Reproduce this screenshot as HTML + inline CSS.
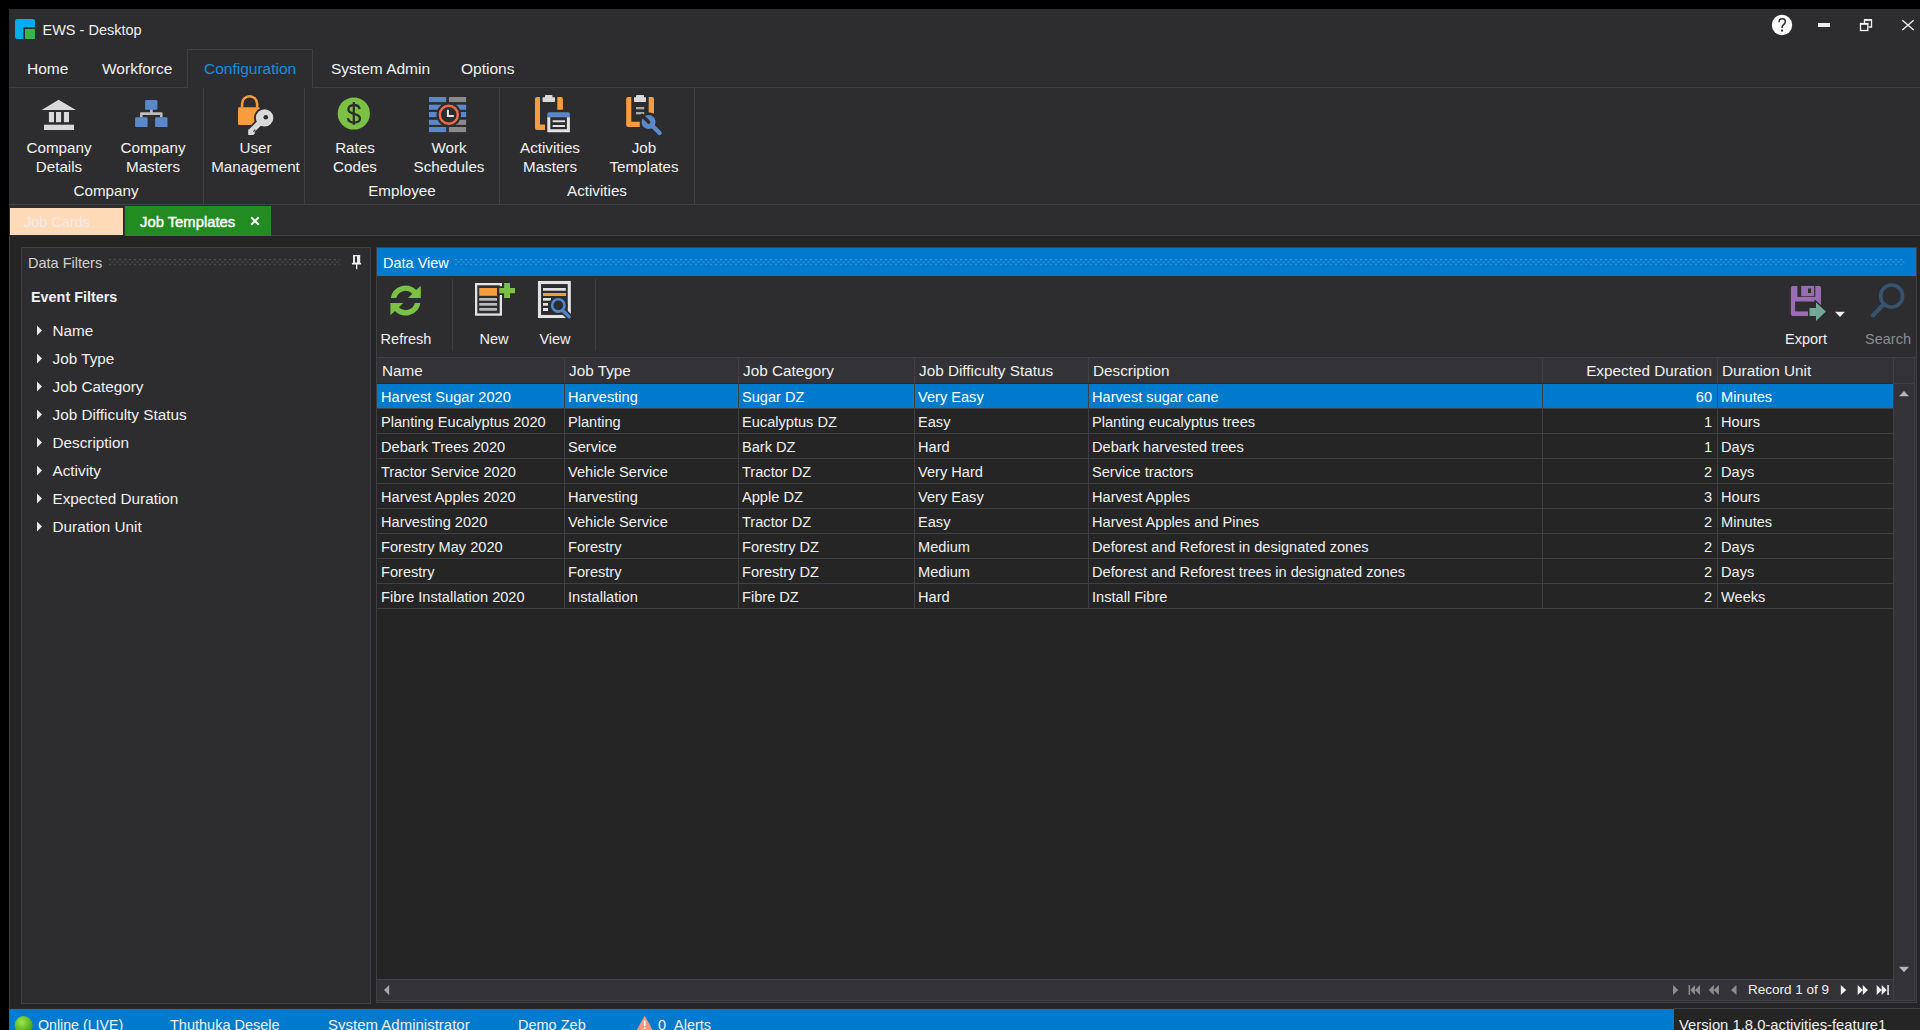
<!DOCTYPE html>
<html><head><meta charset="utf-8"><title>EWS - Desktop</title>
<style>
html,body{margin:0;padding:0;background:#000;width:1920px;height:1030px;overflow:hidden;position:relative;}
.t{position:absolute;white-space:nowrap;line-height:20px;font-family:"Liberation Sans",sans-serif;}
.r{position:absolute;}
</style></head><body>
<div class="r" style="left:9px;top:9px;width:1911px;height:1021px;background:#2d2d30;"></div>
<div class="t" style="left:42.5px;top:19.98px;font-size:14.5px;color:#f1f1f1;transform:scaleY(1.06);transform-origin:0 15px;">EWS - Desktop</div>
<div class="r" style="left:187px;top:49px;width:126px;height:39px;background:#2d2d30;border:1px solid #3f3f46;border-bottom:none;box-sizing:border-box;"></div>
<div class="r" style="left:9px;top:87px;width:1911px;height:1px;background:#3f3f46;"></div>
<div class="r" style="left:188px;top:87px;width:124px;height:1px;background:#2d2d30;"></div>
<div class="t" style="left:27px;top:58.63px;font-size:15.5px;color:#f1f1f1;">Home</div>
<div class="t" style="left:102px;top:58.63px;font-size:15.5px;color:#f1f1f1;">Workforce</div>
<div class="t" style="left:204px;top:58.63px;font-size:15.5px;color:#148de2;">Configuration</div>
<div class="t" style="left:331px;top:58.63px;font-size:15.5px;color:#f1f1f1;">System Admin</div>
<div class="t" style="left:461px;top:58.63px;font-size:15.5px;color:#f1f1f1;">Options</div>
<div class="r" style="left:203px;top:88px;width:1px;height:116px;background:#3f3f46;"></div>
<div class="r" style="left:304px;top:88px;width:1px;height:116px;background:#3f3f46;"></div>
<div class="r" style="left:499px;top:88px;width:1px;height:116px;background:#3f3f46;"></div>
<div class="r" style="left:694px;top:88px;width:1px;height:116px;background:#3f3f46;"></div>
<div class="r" style="left:9px;top:204px;width:1911px;height:1px;background:#3f3f46;"></div>
<div class="t" style="left:-241px;width:600px;text-align:center;top:137.73px;font-size:15.2px;color:#f1f1f1;">Company</div>
<div class="t" style="left:-241px;width:600px;text-align:center;top:156.73px;font-size:15.2px;color:#f1f1f1;">Details</div>
<div class="t" style="left:-147px;width:600px;text-align:center;top:137.73px;font-size:15.2px;color:#f1f1f1;">Company</div>
<div class="t" style="left:-147px;width:600px;text-align:center;top:156.73px;font-size:15.2px;color:#f1f1f1;">Masters</div>
<div class="t" style="left:-44.5px;width:600px;text-align:center;top:137.73px;font-size:15.2px;color:#f1f1f1;">User</div>
<div class="t" style="left:-44.5px;width:600px;text-align:center;top:156.73px;font-size:15.2px;color:#f1f1f1;">Management</div>
<div class="t" style="left:55px;width:600px;text-align:center;top:137.73px;font-size:15.2px;color:#f1f1f1;">Rates</div>
<div class="t" style="left:55px;width:600px;text-align:center;top:156.73px;font-size:15.2px;color:#f1f1f1;">Codes</div>
<div class="t" style="left:149px;width:600px;text-align:center;top:137.73px;font-size:15.2px;color:#f1f1f1;">Work</div>
<div class="t" style="left:149px;width:600px;text-align:center;top:156.73px;font-size:15.2px;color:#f1f1f1;">Schedules</div>
<div class="t" style="left:250px;width:600px;text-align:center;top:137.73px;font-size:15.2px;color:#f1f1f1;">Activities</div>
<div class="t" style="left:250px;width:600px;text-align:center;top:156.73px;font-size:15.2px;color:#f1f1f1;">Masters</div>
<div class="t" style="left:344px;width:600px;text-align:center;top:137.73px;font-size:15.2px;color:#f1f1f1;">Job</div>
<div class="t" style="left:344px;width:600px;text-align:center;top:156.73px;font-size:15.2px;color:#f1f1f1;">Templates</div>
<div class="t" style="left:-194px;width:600px;text-align:center;top:180.73px;font-size:15.2px;color:#f1f1f1;">Company</div>
<div class="t" style="left:102px;width:600px;text-align:center;top:180.73px;font-size:15.2px;color:#f1f1f1;">Employee</div>
<div class="t" style="left:297px;width:600px;text-align:center;top:180.73px;font-size:15.2px;color:#f1f1f1;">Activities</div>
<div class="r" style="left:10px;top:208px;width:113px;height:27px;background:#ffdab9;"></div>
<div class="t" style="left:24px;top:211.98px;font-size:14.5px;color:#f3e9e6;">Job Cards</div>
<div class="r" style="left:125px;top:206px;width:146px;height:30px;background:#228b22;"></div>
<div class="t" style="left:140px;top:211.87px;font-size:14.8px;color:#ffffff;-webkit-text-stroke:0.45px #ffffff;">Job Templates</div>
<div class="r" style="left:271px;top:235px;width:1649px;height:1px;background:#3f3f46;"></div>
<svg class="r" style="left:250px;top:216px" width="10" height="10"><path d="M1.2,1.2 L8.8,8.8 M8.8,1.2 L1.2,8.8" stroke="#f4f4f4" stroke-width="2"/></svg>
<div class="r" style="left:9px;top:236px;width:1911px;height:772px;background:#252526;"></div>
<div class="r" style="left:9px;top:236px;width:1px;height:772px;background:#3f3f46;"></div>
<div class="r" style="left:21px;top:247px;width:350px;height:757px;background:#2d2d30;border:1px solid #3f3f46;box-sizing:border-box;"></div>
<div class="t" style="left:28px;top:252.98px;font-size:14.5px;color:#d0d0d0;">Data Filters</div>
<div class="t" style="left:31px;top:287.01px;font-size:14.4px;color:#f1f1f1;font-weight:bold;">Event Filters</div>
<svg class="r" style="left:36px;top:325px" width="7" height="11"><path d="M1 0.5 L6 5.5 L1 10.5Z" fill="#e8e8e8"/></svg>
<div class="t" style="left:52.5px;top:320.70px;font-size:15.3px;color:#f1f1f1;">Name</div>
<svg class="r" style="left:36px;top:353px" width="7" height="11"><path d="M1 0.5 L6 5.5 L1 10.5Z" fill="#e8e8e8"/></svg>
<div class="t" style="left:52.5px;top:348.70px;font-size:15.3px;color:#f1f1f1;">Job Type</div>
<svg class="r" style="left:36px;top:381px" width="7" height="11"><path d="M1 0.5 L6 5.5 L1 10.5Z" fill="#e8e8e8"/></svg>
<div class="t" style="left:52.5px;top:376.70px;font-size:15.3px;color:#f1f1f1;">Job Category</div>
<svg class="r" style="left:36px;top:409px" width="7" height="11"><path d="M1 0.5 L6 5.5 L1 10.5Z" fill="#e8e8e8"/></svg>
<div class="t" style="left:52.5px;top:404.70px;font-size:15.3px;color:#f1f1f1;">Job Difficulty Status</div>
<svg class="r" style="left:36px;top:437px" width="7" height="11"><path d="M1 0.5 L6 5.5 L1 10.5Z" fill="#e8e8e8"/></svg>
<div class="t" style="left:52.5px;top:432.70px;font-size:15.3px;color:#f1f1f1;">Description</div>
<svg class="r" style="left:36px;top:465px" width="7" height="11"><path d="M1 0.5 L6 5.5 L1 10.5Z" fill="#e8e8e8"/></svg>
<div class="t" style="left:52.5px;top:460.70px;font-size:15.3px;color:#f1f1f1;">Activity</div>
<svg class="r" style="left:36px;top:493px" width="7" height="11"><path d="M1 0.5 L6 5.5 L1 10.5Z" fill="#e8e8e8"/></svg>
<div class="t" style="left:52.5px;top:488.70px;font-size:15.3px;color:#f1f1f1;">Expected Duration</div>
<svg class="r" style="left:36px;top:521px" width="7" height="11"><path d="M1 0.5 L6 5.5 L1 10.5Z" fill="#e8e8e8"/></svg>
<div class="t" style="left:52.5px;top:516.70px;font-size:15.3px;color:#f1f1f1;">Duration Unit</div>
<div class="r" style="left:376px;top:247px;width:1541px;height:756px;background:#2d2d30;border:1px solid #3f3f46;box-sizing:border-box;"></div>
<div class="r" style="left:377px;top:248px;width:1539px;height:28px;background:#007acc;"></div>
<div class="t" style="left:383px;top:252.98px;font-size:14.5px;color:#ffffff;">Data View</div>
<div class="r" style="left:452px;top:279px;width:1px;height:72px;background:#3f3f46;"></div>
<div class="r" style="left:595px;top:279px;width:1px;height:72px;background:#3f3f46;"></div>
<div class="t" style="left:106px;width:600px;text-align:center;top:328.98px;font-size:14.5px;color:#f1f1f1;">Refresh</div>
<div class="t" style="left:194px;width:600px;text-align:center;top:328.98px;font-size:14.5px;color:#f1f1f1;">New</div>
<div class="t" style="left:255px;width:600px;text-align:center;top:328.98px;font-size:14.5px;color:#f1f1f1;">View</div>
<div class="t" style="left:1506px;width:600px;text-align:center;top:328.98px;font-size:14.5px;color:#f1f1f1;">Export</div>
<div class="t" style="left:1588px;width:600px;text-align:center;top:328.98px;font-size:14.5px;color:#8c8c8c;">Search</div>
<div class="r" style="left:377px;top:357px;width:1539px;height:1px;background:#3f3f46;"></div>
<div class="r" style="left:377px;top:358px;width:1516px;height:25px;background:#333337;"></div>
<div class="r" style="left:377px;top:383px;width:1516px;height:1px;background:#2b2b2b;"></div>
<div class="r" style="left:377px;top:384px;width:1516px;height:595px;background:#252526;"></div>
<div class="r" style="left:377px;top:384px;width:1516px;height:24px;background:#007acc;"></div>
<div class="r" style="left:377px;top:408px;width:1516px;height:1px;background:#3f3f46;"></div>
<div class="r" style="left:377px;top:433px;width:1516px;height:1px;background:#3f3f46;"></div>
<div class="r" style="left:377px;top:458px;width:1516px;height:1px;background:#3f3f46;"></div>
<div class="r" style="left:377px;top:483px;width:1516px;height:1px;background:#3f3f46;"></div>
<div class="r" style="left:377px;top:508px;width:1516px;height:1px;background:#3f3f46;"></div>
<div class="r" style="left:377px;top:533px;width:1516px;height:1px;background:#3f3f46;"></div>
<div class="r" style="left:377px;top:558px;width:1516px;height:1px;background:#3f3f46;"></div>
<div class="r" style="left:377px;top:583px;width:1516px;height:1px;background:#3f3f46;"></div>
<div class="r" style="left:377px;top:608px;width:1516px;height:1px;background:#3f3f46;"></div>
<div class="r" style="left:564px;top:358px;width:1px;height:25px;background:#3f3f46;"></div>
<div class="r" style="left:564px;top:384px;width:1px;height:225px;background:#3f3f46;"></div>
<div class="r" style="left:738px;top:358px;width:1px;height:25px;background:#3f3f46;"></div>
<div class="r" style="left:738px;top:384px;width:1px;height:225px;background:#3f3f46;"></div>
<div class="r" style="left:914px;top:358px;width:1px;height:25px;background:#3f3f46;"></div>
<div class="r" style="left:914px;top:384px;width:1px;height:225px;background:#3f3f46;"></div>
<div class="r" style="left:1088px;top:358px;width:1px;height:25px;background:#3f3f46;"></div>
<div class="r" style="left:1088px;top:384px;width:1px;height:225px;background:#3f3f46;"></div>
<div class="r" style="left:1542px;top:358px;width:1px;height:25px;background:#3f3f46;"></div>
<div class="r" style="left:1542px;top:384px;width:1px;height:225px;background:#3f3f46;"></div>
<div class="r" style="left:1717px;top:358px;width:1px;height:25px;background:#3f3f46;"></div>
<div class="r" style="left:1717px;top:384px;width:1px;height:225px;background:#3f3f46;"></div>
<div class="t" style="left:382px;top:360.70px;font-size:15.3px;color:#f1f1f1;">Name</div>
<div class="t" style="left:569px;top:360.70px;font-size:15.3px;color:#f1f1f1;">Job Type</div>
<div class="t" style="left:743px;top:360.70px;font-size:15.3px;color:#f1f1f1;">Job Category</div>
<div class="t" style="left:919px;top:360.70px;font-size:15.3px;color:#f1f1f1;">Job Difficulty Status</div>
<div class="t" style="left:1093px;top:360.70px;font-size:15.3px;color:#f1f1f1;">Description</div>
<div class="t" style="left:1112px;width:600px;text-align:right;top:360.70px;font-size:15.3px;color:#f1f1f1;">Expected Duration</div>
<div class="t" style="left:1722px;top:360.70px;font-size:15.3px;color:#f1f1f1;">Duration Unit</div>
<div class="t" style="left:381px;top:386.94px;font-size:14.6px;color:#ffffff;transform:scaleY(1.06);transform-origin:0 15.06px;">Harvest Sugar 2020</div>
<div class="t" style="left:568px;top:386.94px;font-size:14.6px;color:#ffffff;transform:scaleY(1.06);transform-origin:0 15.06px;">Harvesting</div>
<div class="t" style="left:742px;top:386.94px;font-size:14.6px;color:#ffffff;transform:scaleY(1.06);transform-origin:0 15.06px;">Sugar DZ</div>
<div class="t" style="left:918px;top:386.94px;font-size:14.6px;color:#ffffff;transform:scaleY(1.06);transform-origin:0 15.06px;">Very Easy</div>
<div class="t" style="left:1092px;top:386.94px;font-size:14.6px;color:#ffffff;transform:scaleY(1.06);transform-origin:0 15.06px;">Harvest sugar cane</div>
<div class="t" style="left:1112px;width:600px;text-align:right;top:386.94px;font-size:14.6px;color:#ffffff;transform:scaleY(1.06);transform-origin:0 15.06px;">60</div>
<div class="t" style="left:1721px;top:386.94px;font-size:14.6px;color:#ffffff;transform:scaleY(1.06);transform-origin:0 15.06px;">Minutes</div>
<div class="t" style="left:381px;top:411.94px;font-size:14.6px;color:#f1f1f1;transform:scaleY(1.06);transform-origin:0 15.06px;">Planting Eucalyptus 2020</div>
<div class="t" style="left:568px;top:411.94px;font-size:14.6px;color:#f1f1f1;transform:scaleY(1.06);transform-origin:0 15.06px;">Planting</div>
<div class="t" style="left:742px;top:411.94px;font-size:14.6px;color:#f1f1f1;transform:scaleY(1.06);transform-origin:0 15.06px;">Eucalyptus DZ</div>
<div class="t" style="left:918px;top:411.94px;font-size:14.6px;color:#f1f1f1;transform:scaleY(1.06);transform-origin:0 15.06px;">Easy</div>
<div class="t" style="left:1092px;top:411.94px;font-size:14.6px;color:#f1f1f1;transform:scaleY(1.06);transform-origin:0 15.06px;">Planting eucalyptus trees</div>
<div class="t" style="left:1112px;width:600px;text-align:right;top:411.94px;font-size:14.6px;color:#f1f1f1;transform:scaleY(1.06);transform-origin:0 15.06px;">1</div>
<div class="t" style="left:1721px;top:411.94px;font-size:14.6px;color:#f1f1f1;transform:scaleY(1.06);transform-origin:0 15.06px;">Hours</div>
<div class="t" style="left:381px;top:436.94px;font-size:14.6px;color:#f1f1f1;transform:scaleY(1.06);transform-origin:0 15.06px;">Debark Trees 2020</div>
<div class="t" style="left:568px;top:436.94px;font-size:14.6px;color:#f1f1f1;transform:scaleY(1.06);transform-origin:0 15.06px;">Service</div>
<div class="t" style="left:742px;top:436.94px;font-size:14.6px;color:#f1f1f1;transform:scaleY(1.06);transform-origin:0 15.06px;">Bark DZ</div>
<div class="t" style="left:918px;top:436.94px;font-size:14.6px;color:#f1f1f1;transform:scaleY(1.06);transform-origin:0 15.06px;">Hard</div>
<div class="t" style="left:1092px;top:436.94px;font-size:14.6px;color:#f1f1f1;transform:scaleY(1.06);transform-origin:0 15.06px;">Debark harvested trees</div>
<div class="t" style="left:1112px;width:600px;text-align:right;top:436.94px;font-size:14.6px;color:#f1f1f1;transform:scaleY(1.06);transform-origin:0 15.06px;">1</div>
<div class="t" style="left:1721px;top:436.94px;font-size:14.6px;color:#f1f1f1;transform:scaleY(1.06);transform-origin:0 15.06px;">Days</div>
<div class="t" style="left:381px;top:461.94px;font-size:14.6px;color:#f1f1f1;transform:scaleY(1.06);transform-origin:0 15.06px;">Tractor Service 2020</div>
<div class="t" style="left:568px;top:461.94px;font-size:14.6px;color:#f1f1f1;transform:scaleY(1.06);transform-origin:0 15.06px;">Vehicle Service</div>
<div class="t" style="left:742px;top:461.94px;font-size:14.6px;color:#f1f1f1;transform:scaleY(1.06);transform-origin:0 15.06px;">Tractor DZ</div>
<div class="t" style="left:918px;top:461.94px;font-size:14.6px;color:#f1f1f1;transform:scaleY(1.06);transform-origin:0 15.06px;">Very Hard</div>
<div class="t" style="left:1092px;top:461.94px;font-size:14.6px;color:#f1f1f1;transform:scaleY(1.06);transform-origin:0 15.06px;">Service tractors</div>
<div class="t" style="left:1112px;width:600px;text-align:right;top:461.94px;font-size:14.6px;color:#f1f1f1;transform:scaleY(1.06);transform-origin:0 15.06px;">2</div>
<div class="t" style="left:1721px;top:461.94px;font-size:14.6px;color:#f1f1f1;transform:scaleY(1.06);transform-origin:0 15.06px;">Days</div>
<div class="t" style="left:381px;top:486.94px;font-size:14.6px;color:#f1f1f1;transform:scaleY(1.06);transform-origin:0 15.06px;">Harvest Apples 2020</div>
<div class="t" style="left:568px;top:486.94px;font-size:14.6px;color:#f1f1f1;transform:scaleY(1.06);transform-origin:0 15.06px;">Harvesting</div>
<div class="t" style="left:742px;top:486.94px;font-size:14.6px;color:#f1f1f1;transform:scaleY(1.06);transform-origin:0 15.06px;">Apple DZ</div>
<div class="t" style="left:918px;top:486.94px;font-size:14.6px;color:#f1f1f1;transform:scaleY(1.06);transform-origin:0 15.06px;">Very Easy</div>
<div class="t" style="left:1092px;top:486.94px;font-size:14.6px;color:#f1f1f1;transform:scaleY(1.06);transform-origin:0 15.06px;">Harvest Apples</div>
<div class="t" style="left:1112px;width:600px;text-align:right;top:486.94px;font-size:14.6px;color:#f1f1f1;transform:scaleY(1.06);transform-origin:0 15.06px;">3</div>
<div class="t" style="left:1721px;top:486.94px;font-size:14.6px;color:#f1f1f1;transform:scaleY(1.06);transform-origin:0 15.06px;">Hours</div>
<div class="t" style="left:381px;top:511.94px;font-size:14.6px;color:#f1f1f1;transform:scaleY(1.06);transform-origin:0 15.06px;">Harvesting 2020</div>
<div class="t" style="left:568px;top:511.94px;font-size:14.6px;color:#f1f1f1;transform:scaleY(1.06);transform-origin:0 15.06px;">Vehicle Service</div>
<div class="t" style="left:742px;top:511.94px;font-size:14.6px;color:#f1f1f1;transform:scaleY(1.06);transform-origin:0 15.06px;">Tractor DZ</div>
<div class="t" style="left:918px;top:511.94px;font-size:14.6px;color:#f1f1f1;transform:scaleY(1.06);transform-origin:0 15.06px;">Easy</div>
<div class="t" style="left:1092px;top:511.94px;font-size:14.6px;color:#f1f1f1;transform:scaleY(1.06);transform-origin:0 15.06px;">Harvest Apples and Pines</div>
<div class="t" style="left:1112px;width:600px;text-align:right;top:511.94px;font-size:14.6px;color:#f1f1f1;transform:scaleY(1.06);transform-origin:0 15.06px;">2</div>
<div class="t" style="left:1721px;top:511.94px;font-size:14.6px;color:#f1f1f1;transform:scaleY(1.06);transform-origin:0 15.06px;">Minutes</div>
<div class="t" style="left:381px;top:536.94px;font-size:14.6px;color:#f1f1f1;transform:scaleY(1.06);transform-origin:0 15.06px;">Forestry May 2020</div>
<div class="t" style="left:568px;top:536.94px;font-size:14.6px;color:#f1f1f1;transform:scaleY(1.06);transform-origin:0 15.06px;">Forestry</div>
<div class="t" style="left:742px;top:536.94px;font-size:14.6px;color:#f1f1f1;transform:scaleY(1.06);transform-origin:0 15.06px;">Forestry DZ</div>
<div class="t" style="left:918px;top:536.94px;font-size:14.6px;color:#f1f1f1;transform:scaleY(1.06);transform-origin:0 15.06px;">Medium</div>
<div class="t" style="left:1092px;top:536.94px;font-size:14.6px;color:#f1f1f1;transform:scaleY(1.06);transform-origin:0 15.06px;">Deforest and Reforest in designated zones</div>
<div class="t" style="left:1112px;width:600px;text-align:right;top:536.94px;font-size:14.6px;color:#f1f1f1;transform:scaleY(1.06);transform-origin:0 15.06px;">2</div>
<div class="t" style="left:1721px;top:536.94px;font-size:14.6px;color:#f1f1f1;transform:scaleY(1.06);transform-origin:0 15.06px;">Days</div>
<div class="t" style="left:381px;top:561.94px;font-size:14.6px;color:#f1f1f1;transform:scaleY(1.06);transform-origin:0 15.06px;">Forestry</div>
<div class="t" style="left:568px;top:561.94px;font-size:14.6px;color:#f1f1f1;transform:scaleY(1.06);transform-origin:0 15.06px;">Forestry</div>
<div class="t" style="left:742px;top:561.94px;font-size:14.6px;color:#f1f1f1;transform:scaleY(1.06);transform-origin:0 15.06px;">Forestry DZ</div>
<div class="t" style="left:918px;top:561.94px;font-size:14.6px;color:#f1f1f1;transform:scaleY(1.06);transform-origin:0 15.06px;">Medium</div>
<div class="t" style="left:1092px;top:561.94px;font-size:14.6px;color:#f1f1f1;transform:scaleY(1.06);transform-origin:0 15.06px;">Deforest and Reforest trees in designated zones</div>
<div class="t" style="left:1112px;width:600px;text-align:right;top:561.94px;font-size:14.6px;color:#f1f1f1;transform:scaleY(1.06);transform-origin:0 15.06px;">2</div>
<div class="t" style="left:1721px;top:561.94px;font-size:14.6px;color:#f1f1f1;transform:scaleY(1.06);transform-origin:0 15.06px;">Days</div>
<div class="t" style="left:381px;top:586.94px;font-size:14.6px;color:#f1f1f1;transform:scaleY(1.06);transform-origin:0 15.06px;">Fibre Installation 2020</div>
<div class="t" style="left:568px;top:586.94px;font-size:14.6px;color:#f1f1f1;transform:scaleY(1.06);transform-origin:0 15.06px;">Installation</div>
<div class="t" style="left:742px;top:586.94px;font-size:14.6px;color:#f1f1f1;transform:scaleY(1.06);transform-origin:0 15.06px;">Fibre DZ</div>
<div class="t" style="left:918px;top:586.94px;font-size:14.6px;color:#f1f1f1;transform:scaleY(1.06);transform-origin:0 15.06px;">Hard</div>
<div class="t" style="left:1092px;top:586.94px;font-size:14.6px;color:#f1f1f1;transform:scaleY(1.06);transform-origin:0 15.06px;">Install Fibre</div>
<div class="t" style="left:1112px;width:600px;text-align:right;top:586.94px;font-size:14.6px;color:#f1f1f1;transform:scaleY(1.06);transform-origin:0 15.06px;">2</div>
<div class="t" style="left:1721px;top:586.94px;font-size:14.6px;color:#f1f1f1;transform:scaleY(1.06);transform-origin:0 15.06px;">Weeks</div>
<div class="r" style="left:1893px;top:358px;width:1px;height:642px;background:#3f3f46;"></div>
<div class="r" style="left:1894px;top:358px;width:20px;height:642px;background:#333337;"></div>
<div class="r" style="left:1894px;top:383px;width:20px;height:1px;background:#3f3f46;"></div>
<div class="r" style="left:1914px;top:358px;width:1px;height:643px;background:#3f3f46;"></div>
<div class="r" style="left:377px;top:979px;width:1516px;height:1px;background:#3f3f46;"></div>
<div class="r" style="left:377px;top:980px;width:1516px;height:20px;background:#333337;"></div>
<div class="r" style="left:377px;top:1000px;width:1538px;height:1px;background:#3f3f46;"></div>
<div class="r" style="left:377px;top:1001px;width:1538px;height:1px;background:#2d2d30;"></div>
<div class="t" style="left:1748px;top:980.32px;font-size:13.5px;color:#f1f1f1;">Record 1 of 9</div>
<div class="r" style="left:9px;top:1008px;width:1911px;height:1px;background:#2a2a2c;"></div>
<div class="r" style="left:1674px;top:1008px;width:246px;height:1px;background:#3f3f46;"></div>
<div class="r" style="left:9px;top:1009px;width:1665px;height:21px;background:#007acc;"></div>
<div class="r" style="left:1674px;top:1009px;width:246px;height:21px;background:#252526;"></div>
<div class="t" style="left:38px;top:1015.08px;font-size:14.2px;color:#f1f1f1;">Online (LIVE)</div>
<div class="t" style="left:170px;top:1014.98px;font-size:14.5px;color:#f1f1f1;">Thuthuka Desele</div>
<div class="t" style="left:328px;top:1014.80px;font-size:15.0px;color:#f1f1f1;">System Administrator</div>
<div class="t" style="left:518px;top:1014.98px;font-size:14.5px;color:#f1f1f1;">Demo Zeb</div>
<div class="t" style="left:658px;top:1014.98px;font-size:14.5px;color:#f1f1f1;">0</div>
<div class="t" style="left:674px;top:1014.98px;font-size:14.5px;color:#f1f1f1;">Alerts</div>
<div class="t" style="left:1679px;top:1014.87px;font-size:14.8px;color:#f1f1f1;">Version 1.8.0-activities-feature1</div>
<svg class="r" style="left:0;top:0" width="1920" height="1030"><defs><pattern id="dots" x="109" y="259" width="5" height="4.8" patternUnits="userSpaceOnUse"><rect x="0" y="0" width="2" height="1.2" fill="#4c4c50"/><rect x="2.5" y="2.4" width="2" height="1.2" fill="#4c4c50"/></pattern><pattern id="dots2" x="455" y="259" width="5" height="4.8" patternUnits="userSpaceOnUse"><rect x="0" y="0" width="2" height="1.2" fill="#3a93d6"/><rect x="2.5" y="2.4" width="2" height="1.2" fill="#3a93d6"/></pattern></defs><rect x="109" y="259" width="231" height="6.5" fill="url(#dots)"/><rect x="455" y="259" width="1450" height="6.5" fill="url(#dots2)"/><path d="M15,21.2 Q15,19 17.2,19 H32.8 Q35,19 35,21.2 V27.3 H23.3 V39 H17.2 Q15,39 15,36.8 Z" fill="#00adef"/><rect x="25" y="29" width="10" height="10" fill="#3ab54a"/><circle cx="1782" cy="25" r="10.2" fill="#ffffff"/><path d="M1779,22.3 Q1779,18.8 1782.2,18.8 Q1785.4,18.8 1785.4,21.6 Q1785.4,23.6 1783.2,25 Q1782,26 1782,28" fill="none" stroke="#2d2d30" stroke-width="1.5"/><rect x="1781" y="29.6" width="2" height="2" fill="#2d2d30"/><rect x="1818" y="23" width="12" height="4" fill="#f0f0f0"/><path d="M1864.5,23 V19.8 H1871.5 V27 H1868.3" fill="none" stroke="#f5f5f5" stroke-width="1.3"/><rect x="1864" y="19" width="8" height="1.8" fill="#f5f5f5"/><rect x="1860.5" y="23.5" width="7.3" height="7" fill="none" stroke="#f5f5f5" stroke-width="1.3"/><rect x="1860" y="23" width="8.3" height="1.8" fill="#f5f5f5"/><path d="M1902.3,20.2 L1913.7,30 M1913.7,20.2 L1902.3,30" stroke="#f0f0f0" stroke-width="1.4"/><path d="M58.6,99.7 L41.7,109.9 L75.9,109.9 Z" fill="#d9d9d9"/><rect x="48.9" y="112" width="5.1" height="10.2" fill="#d9d9d9"/><rect x="56" y="112" width="5.1" height="10.2" fill="#d9d9d9"/><rect x="63.9" y="112" width="5.1" height="10.2" fill="#d9d9d9"/><rect x="44" y="124.7" width="30" height="5.3" fill="#d9d9d9"/><path d="M151.4,109 V113.6 M141.3,117.5 V113.6 H161.3 V117.5" fill="none" stroke="#bdbdbd" stroke-width="2.6" stroke-linejoin="round"/><rect x="145.1" y="100" width="12.3" height="9.8" rx="1.2" fill="#5a88c8"/><rect x="135.1" y="117.2" width="12.5" height="9.9" rx="1.2" fill="#5a88c8"/><rect x="155.1" y="117.2" width="12.4" height="9.9" rx="1.2" fill="#5a88c8"/><path d="M242.1,107.6 V103.7 A7.5,7.5 0 0 1 257.1,103.7 V107.6" fill="none" stroke="#f79d3e" stroke-width="2.5"/><rect x="238" y="107.3" width="22" height="17.6" rx="1.2" fill="#f79d3e"/><circle cx="264.6" cy="117.9" r="10.6" fill="#2d2d30"/><path d="M258,124.5 L249.5,133" stroke="#2d2d30" stroke-width="9" stroke-linecap="round"/><circle cx="264.6" cy="117.9" r="8.7" fill="#d9d9d9"/><path d="M266.6,119.9 L252.2,134.3 L248.2,130.3 L262.6,115.9 Z" fill="#d9d9d9"/><path d="M248.2,129.6 V134.9 H253.3 L255.2,133 L253.6,131.4 L255.4,129.6 Z" fill="#d9d9d9"/><path d="M253.4,131.6 L255.3,129.7" stroke="#2d2d30" stroke-width="1.2"/><circle cx="265.8" cy="117.2" r="2.3" fill="#2d2d30"/><circle cx="353.8" cy="113.5" r="16.1" fill="#7bc143"/><path d="M353.8,102 V124.8" stroke="#2d2d30" stroke-width="2.2"/><path d="M359.6,109.2 C359.2,106.4 356.8,105 354,105 C350.6,105 348.4,106.9 348.4,109.3 C348.4,112.2 351.2,113.2 354,113.9 C357.4,114.7 359.9,115.9 359.9,118.6 C359.9,121.2 357.4,122.6 354,122.6 C350.6,122.6 348.3,121.1 347.9,118.2" fill="none" stroke="#2d2d30" stroke-width="2.3"/><rect x="429" y="97" width="17.2" height="5.1" fill="#5a88c8"/><rect x="448.9" y="97" width="17.2" height="5.1" fill="#8a8a8a"/><rect x="429" y="104.7" width="17.2" height="5.1" fill="#5a88c8"/><rect x="448.9" y="104.7" width="17.2" height="5.1" fill="#5a88c8"/><rect x="429" y="112" width="17.2" height="5.1" fill="#5a88c8"/><rect x="448.9" y="112" width="17.2" height="5.1" fill="#5a88c8"/><rect x="429" y="119.8" width="17.2" height="5.1" fill="#5a88c8"/><rect x="448.9" y="119.8" width="17.2" height="5.1" fill="#8a8a8a"/><rect x="429" y="127" width="17.2" height="5.1" fill="#5a88c8"/><rect x="448.9" y="127" width="17.2" height="5.1" fill="#8a8a8a"/><circle cx="448.8" cy="114.7" r="12.3" fill="#2d2d30"/><circle cx="448.8" cy="114.7" r="9" fill="none" stroke="#f26b43" stroke-width="2.4"/><path d="M447.9,109.8 V116.1 H453.8" fill="none" stroke="#e6e6e6" stroke-width="2"/><path d="M535,99 Q535,97 537,97 H540 V124.4 H545 V130 H537 Q535,130 535,128 Z" fill="#f79d3e"/><path d="M557.3,97 H561 Q562.9,97 562.9,99 V109.8 H557.3 Z" fill="#f79d3e"/><path d="M545.5,95 H552 Q552.5,95 552.5,96 V97.2 H555 V101.2 Q555,102 554,102 H543.5 Q542.5,102 542.5,101.2 V97.2 H545 V96 Q545,95 545.5,95 Z" fill="#d9d9d9"/><path d="M547.3,114 Q547.3,112.3 549,112.3 H568.2 Q569.9,112.3 569.9,114 V117.3 H547.3 Z" fill="#5a88c8"/><path d="M548.8,117.3 V130.7 H568.4 V117.3" fill="none" stroke="#e3e3e3" stroke-width="3"/><rect x="552.6" y="120.3" width="12.4" height="1.9" fill="#e3e3e3"/><rect x="552.6" y="125" width="12.4" height="2" fill="#e3e3e3"/><path d="M626.2,99 Q626.2,97 628.2,97 H631.3 V121.7 H639.8 V127 H628.2 Q626.2,127 626.2,125 Z" fill="#f79d3e"/><path d="M648.7,97 H652 Q654,97 654,99 V113.6 L648.7,112.2 Z" fill="#f79d3e"/><path d="M637,95 H643.5 Q644,95 644,96 V97.2 H646 V101.2 Q646,102 645,102 H635 Q634,102 634,101.2 V97.2 H636 V96 Q636,95 637,95 Z" fill="#d9d9d9"/><rect x="636" y="107" width="8.2" height="2.3" fill="#a9a9a9"/><rect x="636" y="112" width="8.2" height="2.4" fill="#a9a9a9"/><circle cx="648.6" cy="122" r="8.6" fill="#2d2d30"/><path d="M651,124.5 L659.6,133" stroke="#2d2d30" stroke-width="7" stroke-linecap="round"/><circle cx="648.6" cy="122" r="7" fill="#5a88c8"/><path d="M651,124.5 L659.6,133" stroke="#5a88c8" stroke-width="4.4" stroke-linecap="round"/><path d="M642,115.4 L648.6,122" stroke="#2d2d30" stroke-width="3.6" stroke-linecap="round"/><path d="M390.8,298 A15,15 0 0 1 416.2,289.9 L420.8,285.7 L420.8,298 L408,298 L412.4,293.7 A9.6,9.6 0 0 0 396.3,298 Z" fill="#7bc143"/><path d="M390.8,298 A15,15 0 0 1 416.2,289.9 L420.8,285.7 L420.8,298 L408,298 L412.4,293.7 A9.6,9.6 0 0 0 396.3,298 Z" fill="#7bc143" transform="rotate(180 405.6 300.5)"/><rect x="476.15" y="284.15" width="24.7" height="30.4" fill="none" stroke="#e3e3e3" stroke-width="2.3"/><path d="M504.1,283 H510 V288 H515 V293.2 H510 V298 H504.1 V293.2 H499.2 V288 H504.1 Z" fill="#7bc143" stroke="#2d2d30" stroke-width="3.4" paint-order="stroke"/><rect x="479.2" y="288" width="17.8" height="7.8" fill="#f79d3e"/><rect x="479.2" y="298" width="17.8" height="2.7" fill="#b9b9b9"/><rect x="479.2" y="303" width="17.8" height="2.7" fill="#b9b9b9"/><rect x="479.2" y="308" width="17.8" height="2.7" fill="#b9b9b9"/><rect x="539.5" y="282.5" width="29.8" height="34" fill="none" stroke="#e3e3e3" stroke-width="3.1"/><rect x="543" y="288" width="22.8" height="2.7" fill="#e3e3e3"/><rect x="543" y="293" width="23" height="3" fill="#f79d3e"/><rect x="543" y="298" width="8" height="2.7" fill="#e3e3e3"/><rect x="543" y="303" width="5" height="2.7" fill="#e3e3e3"/><rect x="543" y="308" width="5" height="3" fill="#e3e3e3"/><circle cx="558.3" cy="305.4" r="9.4" fill="#2d2d30"/><path d="M563.3,311 L569.2,316.8" stroke="#2d2d30" stroke-width="6.4" stroke-linecap="round"/><circle cx="558.3" cy="305.4" r="6.2" fill="none" stroke="#4f86cc" stroke-width="2.6"/><path d="M563.3,311 L569.2,316.8" stroke="#4f86cc" stroke-width="3.2" stroke-linecap="round"/><rect x="1790.9" y="285.9" width="30.1" height="30" rx="2" fill="#9b6cb6"/><rect x="1797.4" y="285.9" width="17.9" height="11" fill="#2d2d30"/><rect x="1801.2" y="285.9" width="12.9" height="10.3" fill="#9b6cb6"/><rect x="1808" y="288.5" width="3" height="4.5" fill="#2d2d30"/><rect x="1795.1" y="301.5" width="20.5" height="9.9" fill="#2d2d30"/><path d="M1809.5,308 H1816 V302.6 L1825.9,311.6 L1816,320.9 V316 H1809.5 Z" fill="#72a898" stroke="#2d2d30" stroke-width="3" paint-order="stroke"/><path d="M1835,311.7 H1844.9 L1840,317 Z" fill="#f0f0f0"/><circle cx="1891.6" cy="296" r="11" fill="none" stroke="#36536f" stroke-width="3.6"/><path d="M1883.6,304.2 L1873,315.4" stroke="#36536f" stroke-width="4.2" stroke-linecap="round"/><rect x="353" y="255" width="7.2" height="8.6" fill="#e8e8e8"/><rect x="355" y="256.3" width="2" height="6.2" fill="#2d2d30"/><rect x="351.9" y="262.9" width="9.2" height="1.6" fill="#f0f0f0"/><rect x="356" y="264" width="1.3" height="5.2" fill="#f0f0f0"/><path d="M1899,396.2 L1904,390.9 L1909,396.2 Z" fill="#b5b5b5"/><path d="M1899,966.7 L1904,972.2 L1909,966.7 Z" fill="#b5b5b5"/><path d="M384,990 L389.2,985 L389.2,995.2 Z" fill="#a8a8a8"/><path d="M1673,985 L1678.3,990 L1673,995 Z" fill="#8c8c8c"/><rect x="1688.6" y="985" width="1.5" height="10" fill="#8c8c8c"/><path d="M1690.3,990 L1695,985 V995 Z M1695,990 L1700,985 V995 Z" fill="#8c8c8c"/><path d="M1708.7,990 L1713.8,985 V995 Z M1713.8,990 L1718.9,985 V995 Z" fill="#8c8c8c"/><path d="M1731,990 L1736.5,985 V995 Z" fill="#8c8c8c"/><path d="M1840.8,985 L1846.2,990 L1840.8,995 Z" fill="#f0f0f0"/><path d="M1857.7,985 L1862.8,990 L1857.7,995 Z M1862.8,985 L1867.9,990 L1862.8,995 Z" fill="#f0f0f0"/><path d="M1876.7,985 L1881.7,990 L1876.7,995 Z M1881.7,985 L1886.7,990 L1881.7,995 Z" fill="#f0f0f0"/><rect x="1887.3" y="985" width="1.5" height="10" fill="#f0f0f0"/><defs><radialGradient id="gd" cx="0.4" cy="0.35" r="0.7"><stop offset="0" stop-color="#9be84a"/><stop offset="1" stop-color="#3f9a12"/></radialGradient></defs><circle cx="23.6" cy="1025" r="9" fill="url(#gd)"/><path d="M644.7,1015.7 L635,1033 L654.4,1033 Z" fill="#f4977a"/><rect x="643.9" y="1020.5" width="1.7" height="5.6" fill="#ffffff"/><rect x="643.9" y="1027.3" width="1.7" height="1.6" fill="#ffffff"/></svg>

</body></html>
